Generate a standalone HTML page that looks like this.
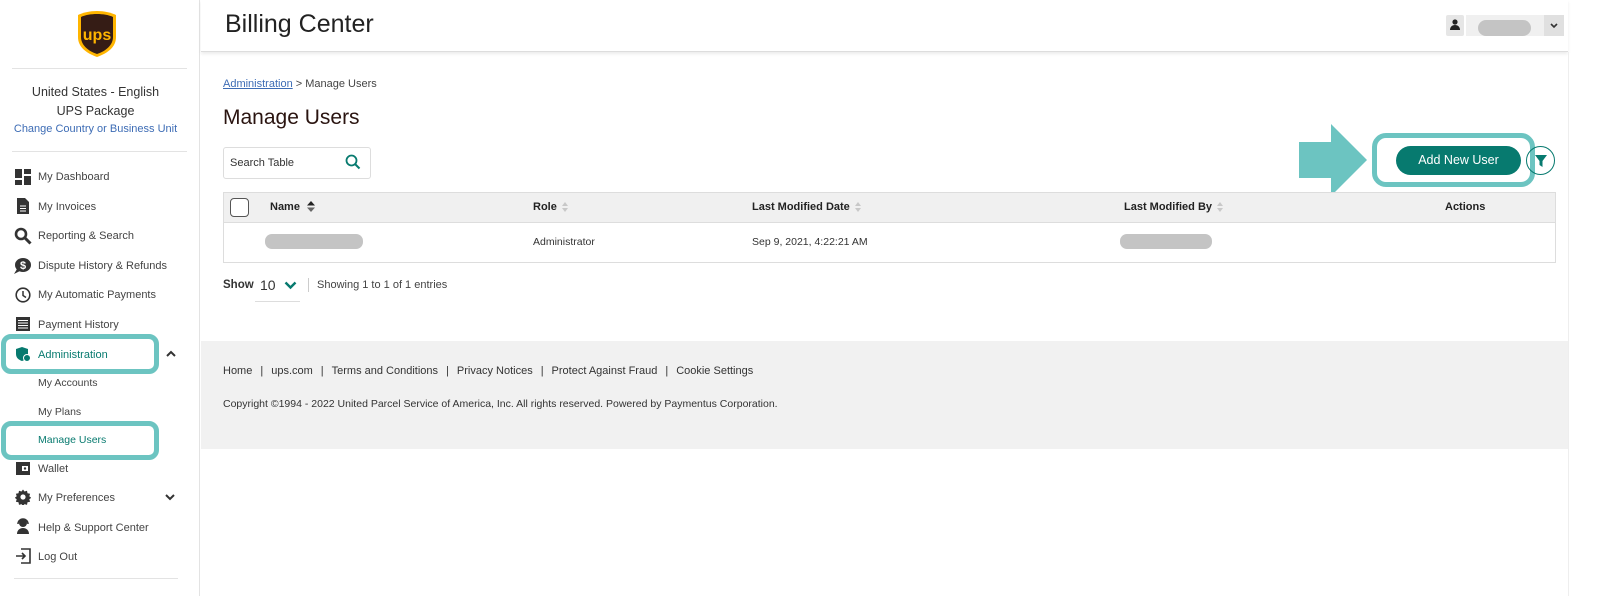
<!DOCTYPE html>
<html><head><meta charset="utf-8"><style>
*{box-sizing:border-box;margin:0;padding:0}
body{width:1600px;height:596px;overflow:hidden;background:#fff;font-family:"Liberation Sans",sans-serif;color:#333;position:relative}
.abs{position:absolute}
.side{left:0;top:0;width:200px;height:596px;border-right:1px solid #e3e3e3}
.nav{position:absolute;left:38px;font-size:11px;color:#444;white-space:nowrap}
.ic{position:absolute;left:15px;width:16px;height:16px}
.hl{position:absolute;border:5px solid #6cc4c1;border-radius:10px}
.sort{display:inline-block;vertical-align:middle;margin-left:5px;width:7px;height:10px;position:relative}
.sort:before,.sort:after{content:"";position:absolute;left:0;border-left:3.5px solid transparent;border-right:3.5px solid transparent}
.sort:before{top:0;border-bottom:4px solid #c8c8c8}
.sort:after{bottom:0;border-top:4px solid #c8c8c8}
.blur{background:#c4c4c4;border-radius:7px;height:15px;position:absolute}
.sep{display:inline-block;margin:0 8px}
</style></head><body>
<div class="abs side">
  <svg class="abs" style="left:77px;top:10px" width="40" height="48" viewBox="0 0 40 48"><path d="M20 1C13 1 6 2.5 1 5v22c0 10 8 16 19 20 11-4 19-10 19-20V5C34 2.5 27 1 20 1z" fill="#ffb500"/><path d="M20 4C14 4 8 5 4 7v20c0 8 7 14 16 17 9-3 16-9 16-17V7C32 5 26 4 20 4z" fill="#351c15"/><text x="20" y="30" text-anchor="middle" font-family="Liberation Sans" font-weight="bold" font-size="16" fill="#ffb500">ups</text></svg>
  <div class="abs" style="left:12px;top:68px;width:175px;border-top:1px solid #e3e3e3"></div>
  <div class="abs" style="left:0;top:83px;width:191px;text-align:center;font-size:12.5px;line-height:19px;color:#333">United States - English<br>UPS Package</div>
  <div class="abs" style="left:0;top:123px;width:191px;text-align:center;font-size:11px;color:#3d6cb5">Change Country or Business Unit</div>
  <div class="abs" style="left:12px;top:151px;width:175px;border-top:1px solid #e3e3e3"></div>

  <svg class="ic" style="top:169px" viewBox="0 0 16 16"><rect x="0" y="0" width="7" height="9" fill="#333"/><rect x="9" y="0" width="7" height="5" fill="#333"/><rect x="0" y="11" width="7" height="5" fill="#333"/><rect x="9" y="7" width="7" height="9" fill="#333"/></svg>
  <div class="nav" style="top:171px">My Dashboard</div>
  <svg class="ic" style="top:198px" viewBox="0 0 16 16"><path d="M2 0h8l4 4v12H2z" fill="#333"/><path d="M5 8h6M5 10.5h6M5 13h6" stroke="#fff" stroke-width="1"/></svg>
  <div class="nav" style="top:201px">My Invoices</div>
  <svg class="ic" style="top:227px;width:18px;height:18px;left:14px" viewBox="0 0 18 18"><circle cx="7" cy="7" r="5" fill="none" stroke="#333" stroke-width="2.6"/><path d="M11 11l5.5 5.5" stroke="#333" stroke-width="3"/></svg>
  <div class="nav" style="top:230px">Reporting &amp; Search</div>
  <svg class="ic" style="top:257px;width:18px;height:18px;left:13px" viewBox="0 0 18 18"><ellipse cx="10" cy="8" rx="8" ry="7" fill="#333"/><path d="M4 12L1 17l6-3z" fill="#333"/><text x="10" y="12" text-anchor="middle" font-size="11" font-weight="bold" fill="#fff" font-family="Liberation Sans">$</text></svg>
  <div class="nav" style="top:260px">Dispute History &amp; Refunds</div>
  <svg class="ic" style="top:287px" viewBox="0 0 16 16"><circle cx="8" cy="8" r="6.8" fill="none" stroke="#333" stroke-width="1.6"/><path d="M8 4v4.5l3 2" fill="none" stroke="#333" stroke-width="1.5"/></svg>
  <div class="nav" style="top:289px">My Automatic Payments</div>
  <svg class="ic" style="top:316px" viewBox="0 0 16 16"><rect x="1" y="1" width="14" height="14" fill="#333"/><path d="M3 4.5h10M3 7h10M3 9.5h10M3 12h10" stroke="#fff" stroke-width="1"/></svg>
  <div class="nav" style="top:319px">Payment History</div>

  <div class="hl" style="left:1px;top:334px;width:158px;height:40px"></div>
  <svg class="ic" style="top:346px" viewBox="0 0 16 16"><path d="M7 1l6 2v5c0 4-3 6-6 7-3-1-6-3-6-7V3z" fill="#077a6f"/><circle cx="12" cy="12" r="3.5" fill="#077a6f" stroke="#fff" stroke-width="1"/></svg>
  <div class="nav" style="top:349px;color:#077a6f">Administration</div>
  <svg class="abs" style="left:166px;top:350px" width="10" height="8" viewBox="0 0 10 8"><path d="M1 6l4-4 4 4" fill="none" stroke="#333" stroke-width="2"/></svg>
  <div class="nav" style="top:377px;font-size:10.5px">My Accounts</div>
  <div class="nav" style="top:406px;font-size:10.5px">My Plans</div>
  <div class="hl" style="left:1px;top:421px;width:158px;height:39px"></div>
  <div class="nav" style="top:434px;font-size:10.5px;color:#077a6f">Manage Users</div>
  <svg class="ic" style="top:460px" viewBox="0 0 16 16"><rect x="1" y="2" width="14" height="13" fill="#333"/><rect x="7" y="6" width="6" height="5" fill="#fff"/><circle cx="10" cy="8.5" r="1.2" fill="#333"/></svg>
  <div class="nav" style="top:463px">Wallet</div>
  <svg class="ic" style="top:489px" viewBox="0 0 16 16"><path d="M8 0.5l1.5 2 2.5-.8.5 2.6 2.6.5-.8 2.5 2 1.5-2 1.5.8 2.5-2.6.5-.5 2.6-2.5-.8-1.5 2-1.5-2-2.5.8-.5-2.6-2.6-.5.8-2.5-2-1.5 2-1.5-.8-2.5 2.6-.5.5-2.6 2.5.8z" fill="#333"/><circle cx="8" cy="8" r="2.6" fill="#fff"/></svg>
  <div class="nav" style="top:492px">My Preferences</div>
  <svg class="abs" style="left:165px;top:493px" width="10" height="8" viewBox="0 0 10 8"><path d="M1 2l4 4 4-4" fill="none" stroke="#333" stroke-width="2"/></svg>
  <svg class="ic" style="top:518px" viewBox="0 0 16 16"><circle cx="8" cy="5" r="4" fill="#333"/><path d="M2 16c0-4 3-6 6-6s6 2 6 6z" fill="#333"/><path d="M3 6a5 5 0 0 1 10 0" fill="none" stroke="#333" stroke-width="1.5"/></svg>
  <div class="nav" style="top:522px">Help &amp; Support Center</div>
  <svg class="ic" style="top:548px" viewBox="0 0 16 16"><path d="M6 1h9v14H6" fill="none" stroke="#333" stroke-width="1.6"/><path d="M1 8h9M7 5l3 3-3 3" fill="none" stroke="#333" stroke-width="1.6"/></svg>
  <div class="nav" style="top:551px">Log Out</div>
  <div class="abs" style="left:14px;top:578px;width:164px;border-top:1px solid #e3e3e3"></div>
</div>

<div class="abs" style="left:201px;top:0;width:1367px;height:52px;border-bottom:1px solid #ddd;box-shadow:0 2px 3px rgba(0,0,0,.08)"></div>
<div class="abs" style="left:225px;top:10px;font-size:25px;color:#222">Billing Center</div>
<div class="abs" style="left:1446px;top:15px;width:18px;height:21px;background:#e6e6e6;border-radius:2px"></div>
<svg class="abs" style="left:1450px;top:19px" width="10" height="12" viewBox="0 0 10 12"><circle cx="5" cy="3" r="2.6" fill="#222"/><path d="M0 11c0-3 2-5 5-5s5 2 5 5z" fill="#222"/></svg>
<div class="abs" style="left:1466px;top:15px;width:78px;height:21px;background:#f0f0f0"></div>
<div class="blur" style="left:1478px;top:20px;width:53px;height:16px;border-radius:8px"></div>
<div class="abs" style="left:1544px;top:15px;width:20px;height:21px;background:#e0e0e0"></div>
<svg class="abs" style="left:1550px;top:23px" width="8" height="6" viewBox="0 0 8 6"><path d="M1 1l3 3 3-3" fill="none" stroke="#333" stroke-width="1.6"/></svg>
<div class="abs" style="left:1568px;top:52px;height:544px;border-left:1px solid #eee"></div>

<div class="abs" style="left:223px;top:78px;font-size:11px;color:#444"><span style="color:#3d6cb5;text-decoration:underline">Administration</span> &gt; Manage Users</div>
<div class="abs" style="left:223px;top:106px;font-size:21px;color:#2a1410">Manage Users</div>
<div class="abs" style="left:223px;top:147px;width:148px;height:32px;border:1px solid #ddd;border-radius:3px"></div>
<div class="abs" style="left:230px;top:157px;font-size:11px;color:#333">Search Table</div>
<svg class="abs" style="left:345px;top:154px" width="16" height="16" viewBox="0 0 16 16"><circle cx="6.5" cy="6.5" r="5" fill="none" stroke="#077a6f" stroke-width="1.8"/><path d="M10 10l4.5 4.5" stroke="#077a6f" stroke-width="2"/></svg>

<svg class="abs" style="left:1299px;top:124px" width="70" height="72" viewBox="0 0 70 72"><path d="M0 18h32V0l36 36-36 36V54H0z" fill="#6cc4c1"/></svg>
<div class="hl" style="left:1372px;top:133px;width:163px;height:54px;border-radius:14px"></div>
<div class="abs" style="left:1396px;top:146px;width:125px;height:29px;background:#077a6f;border-radius:15px;color:#fff;font-size:12.5px;text-align:center;line-height:29px">Add New User</div>
<div class="abs" style="left:1526px;top:146px;width:29px;height:29px;border:1px solid #077a6f;border-radius:50%"></div>
<svg class="abs" style="left:1535px;top:155px" width="12" height="12" viewBox="0 0 12 12"><path d="M0 0h12L7.5 6v6l-3-2V6z" fill="#077a6f"/></svg>

<div class="abs" style="left:223px;top:192px;width:1333px;height:71px;border:1px solid #ddd"></div>
<div class="abs" style="left:224px;top:193px;width:1331px;height:30px;background:#f0f0f0;border-bottom:1px solid #ddd"></div>
<div class="abs" style="left:230px;top:198px;width:19px;height:19px;border:1px solid #555;border-radius:4px;background:#fff"></div>
<div class="abs" style="left:270px;top:201px;font-size:11px;font-weight:bold;color:#222">Name</div>
<svg class="abs" style="left:307px;top:201px" width="8" height="11" viewBox="0 0 8 11"><path d="M0 4.5L4 0l4 4.5z" fill="#222"/><path d="M0 6.5L4 11l4-4.5z" fill="#666"/></svg>
<div class="abs" style="left:533px;top:201px;font-size:11px;font-weight:bold;color:#222">Role<span class="sort"></span></div>
<div class="abs" style="left:752px;top:201px;font-size:11px;font-weight:bold;color:#222">Last Modified Date<span class="sort"></span></div>
<div class="abs" style="left:1124px;top:201px;font-size:11px;font-weight:bold;color:#222">Last Modified By<span class="sort"></span></div>
<div class="abs" style="left:1445px;top:201px;font-size:11px;font-weight:bold;color:#222">Actions</div>
<div class="blur" style="left:265px;top:234px;width:98px;height:15px"></div>
<div class="abs" style="left:533px;top:236px;font-size:10.5px;color:#333">Administrator</div>
<div class="abs" style="left:752px;top:236px;font-size:10.5px;color:#333">Sep 9, 2021, 4:22:21 AM</div>
<div class="blur" style="left:1120px;top:234px;width:92px;height:15px"></div>

<div class="abs" style="left:223px;top:279px;font-size:11.5px;color:#333"><b>Show</b></div>
<div class="abs" style="left:260px;top:277px;font-size:14px;color:#333">10</div>
<svg class="abs" style="left:284px;top:281px" width="13" height="9" viewBox="0 0 13 9"><path d="M1.5 1.5l5 5 5-5" fill="none" stroke="#077a6f" stroke-width="2.4"/></svg>
<div class="abs" style="left:255px;top:301px;width:45px;border-top:1px solid #ddd"></div>
<div class="abs" style="left:308px;top:278px;height:14px;border-left:1px solid #ccc"></div>
<div class="abs" style="left:317px;top:279px;font-size:11px;color:#444">Showing 1 to 1 of 1 entries</div>

<div class="abs" style="left:201px;top:341px;width:1367px;height:108px;background:#f1f1f1">
  <div class="abs" style="left:22px;top:24px;font-size:11px;color:#333;white-space:nowrap">Home<span class="sep">|</span>ups.com<span class="sep">|</span>Terms and Conditions<span class="sep">|</span>Privacy Notices<span class="sep">|</span>Protect Against Fraud<span class="sep">|</span>Cookie Settings</div>
  <div class="abs" style="left:22px;top:57px;font-size:10.5px;color:#333;white-space:nowrap">Copyright ©1994 - 2022 United Parcel Service of America, Inc. All rights reserved. Powered by Paymentus Corporation.</div>
</div>
</body></html>
